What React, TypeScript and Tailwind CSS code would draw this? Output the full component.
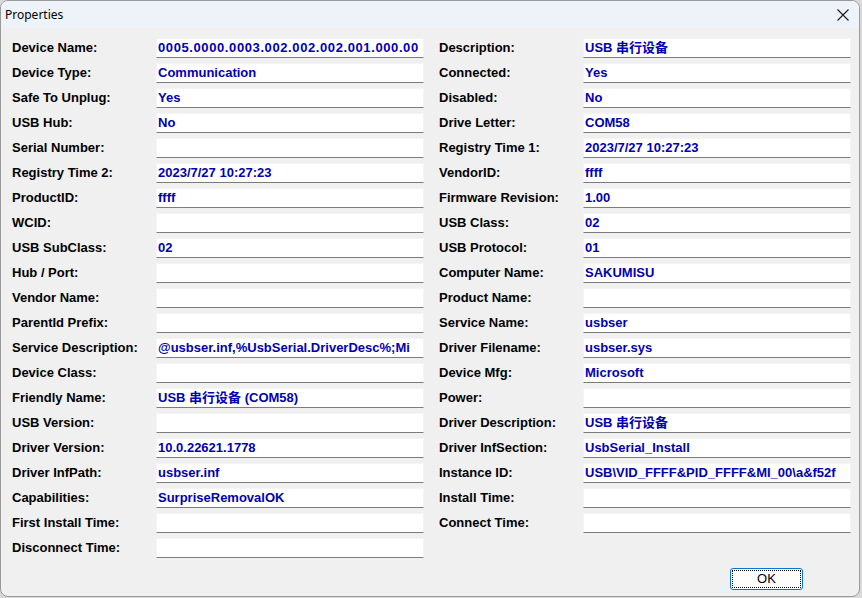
import * as React from "react"

interface Field {
    label: string
    value: string
    wide?: boolean
}

const LEFT: Field[] = [
    { label: "Device Name:", value: "0005.0000.0003.002.002.002.001.000.00", wide: true },
    { label: "Device Type:", value: "Communication" },
    { label: "Safe To Unplug:", value: "Yes" },
    { label: "USB Hub:", value: "No" },
    { label: "Serial Number:", value: "" },
    { label: "Registry Time 2:", value: "2023/7/27 10:27:23" },
    { label: "ProductID:", value: "ffff" },
    { label: "WCID:", value: "" },
    { label: "USB SubClass:", value: "02" },
    { label: "Hub / Port:", value: "" },
    { label: "Vendor Name:", value: "" },
    { label: "ParentId Prefix:", value: "" },
    { label: "Service Description:", value: "@usbser.inf,%UsbSerial.DriverDesc%;Mi" },
    { label: "Device Class:", value: "" },
    { label: "Friendly Name:", value: "USB 串行设备 (COM58)" },
    { label: "USB Version:", value: "" },
    { label: "Driver Version:", value: "10.0.22621.1778" },
    { label: "Driver InfPath:", value: "usbser.inf" },
    { label: "Capabilities:", value: "SurpriseRemovalOK" },
    { label: "First Install Time:", value: "" },
    { label: "Disconnect Time:", value: "" },
]

const RIGHT: Field[] = [
    { label: "Description:", value: "USB 串行设备" },
    { label: "Connected:", value: "Yes" },
    { label: "Disabled:", value: "No" },
    { label: "Drive Letter:", value: "COM58" },
    { label: "Registry Time 1:", value: "2023/7/27 10:27:23" },
    { label: "VendorID:", value: "ffff" },
    { label: "Firmware Revision:", value: "1.00" },
    { label: "USB Class:", value: "02" },
    { label: "USB Protocol:", value: "01" },
    { label: "Computer Name:", value: "SAKUMISU" },
    { label: "Product Name:", value: "" },
    { label: "Service Name:", value: "usbser" },
    { label: "Driver Filename:", value: "usbser.sys" },
    { label: "Device Mfg:", value: "Microsoft" },
    { label: "Power:", value: "" },
    { label: "Driver Description:", value: "USB 串行设备" },
    { label: "Driver InfSection:", value: "UsbSerial_Install" },
    { label: "Instance ID:", value: "USB\\VID_FFFF&PID_FFFF&MI_00\\a&f52f" },
    { label: "Install Time:", value: "" },
    { label: "Connect Time:", value: "" },
]

function Row({ field }: { field: Field }) {
    return (
        <div className="flex items-center h-[20px]">
            <div className="w-[144px] shrink-0 text-[13px] font-bold text-black whitespace-nowrap leading-[16px]">
                {field.label}
            </div>
            <div className="w-[268px] h-[20px] shrink-0 bg-white border-t border-l border-r border-[#f4f4f4] border-b border-b-[#7c7c7c] overflow-hidden pl-[1px] text-[13px] font-bold text-[#0000b4] whitespace-nowrap leading-[17px]">
                <span className={field.wide ? "tracking-[0.6px]" : ""}>{field.value}</span>
            </div>
        </div>
    )
}

export default function App() {
    return (
        <div
            className="w-[862px] h-[598px] bg-[#d9d9d9] overflow-hidden"
            style={{ fontFamily: '"Liberation Sans", "Noto Sans CJK SC", sans-serif' }}
        >
            <div className="w-[860px] h-[597px] bg-[#f0f0f0] border border-[#9a9a9a] rounded-[8px] overflow-hidden flex flex-col">
                {/* Title bar */}
                <div className="h-[27px] shrink-0 bg-[#eef3fa] flex items-center justify-between pl-[4px] pr-[8px]">
                    <span className="text-[12px] text-black" style={{ fontFamily: '"Noto Sans", sans-serif' }}>
                        Properties
                    </span>
                    <svg width="12" height="12" viewBox="0 0 12 12" className="mr-[2px]">
                        <path d="M0.5 0.5 L11.5 11.5 M11.5 0.5 L0.5 11.5" stroke="#1a1a1a" strokeWidth="1.1" />
                    </svg>
                </div>

                {/* Body */}
                <div className="flex-1 flex flex-col pt-[10px] pl-[11px]">
                    <div className="flex gap-[15px]">
                        <div className="flex flex-col gap-[5px]">
                            {LEFT.map((f) => (
                                <Row key={f.label} field={f} />
                            ))}
                        </div>
                        <div className="flex flex-col gap-[5px]">
                            {RIGHT.map((f) => (
                                <Row key={f.label} field={f} />
                            ))}
                        </div>
                    </div>

                    <div className="flex justify-end pr-[56px] mt-[10px]">
                        <button className="w-[73px] h-[22px] rounded-[3px] border border-[#0078d4] bg-[#fdfdfd] p-[1px]">
                            <div className="w-full h-full border border-dotted border-black flex items-center justify-center text-[13px] text-black">
                                OK
                            </div>
                        </button>
                    </div>
                </div>
            </div>
        </div>
    )
}
